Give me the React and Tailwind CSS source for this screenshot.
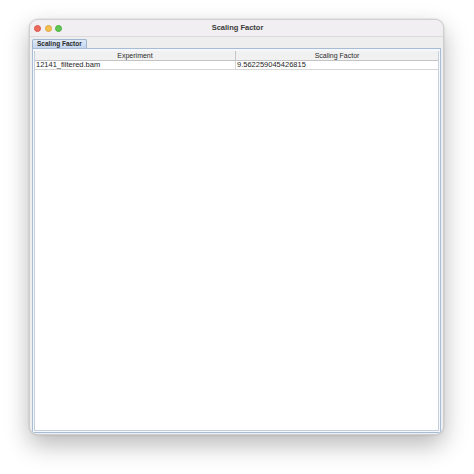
const font = { fontFamily: '"Liberation Sans", Arial, sans-serif' };

const TrafficLights = () => (
  <div className="flex items-center gap-[3.5px] absolute left-[4px] top-[5px]">
    <span className="w-[7px] h-[7px] rounded-full bg-[#ed6a5e] border border-[#d9554a]" />
    <span className="w-[7px] h-[7px] rounded-full bg-[#f5bf4f] border border-[#dba43c]" />
    <span className="w-[7px] h-[7px] rounded-full bg-[#61c554] border border-[#4eae43]" />
  </div>
);

export default function App() {
  return (
    <div
      className="w-[474px] h-[474px] bg-white pl-[29px] pt-[19px] text-[#1a1a1a]"
      style={font}>
      <div className="w-[415px] h-[416px] flex flex-col rounded-[9px] border border-[#cfcfcf] bg-[#efeeef] overflow-hidden shadow-[0_10px_24px_rgba(0,0,0,0.28),0_0_2px_rgba(0,0,0,0.2)]">
        {/* title bar */}
        <div className="relative h-[17px] shrink-0 flex items-center justify-center bg-[#f1eff1] border-b border-[#dcdadc] pl-[2px]">
          <TrafficLights />
          <span className="text-[7.5px] font-bold text-[#3a3a3a] leading-none mt-[-1px]">
            Scaling Factor
          </span>
        </div>

        {/* content */}
        <div className="flex-1 flex flex-col pt-[2px] px-[2px] pb-[1px] bg-[#eeeeee]">
          <div className="flex">
            <div className="h-[9px] px-[4px] flex items-center rounded-t-[2px] border border-b-0 border-[#9fb4cf] bg-gradient-to-b from-[#dfeaf7] to-[#c3d6ee] text-[6.5px] font-bold text-[#2b2b2b] leading-none">
              Scaling Factor
            </div>
          </div>
          <div className="flex-1 border border-[#a9bcd6] bg-[#f4f7fb] p-[1px] pt-[2px]">
            <div className="h-full bg-white border border-t-0 border-[#c6cfdc]">
              <div className="grid grid-cols-[201px_1fr] h-[10px] bg-[#f1f1f1] border-b border-[#c4c4c4] text-[7px] leading-none text-[#2b2b2b]">
                <div className="flex items-center justify-center border-r border-[#c4c4c4]">
                  Experiment
                </div>
                <div className="flex items-center justify-center">
                  Scaling Factor
                </div>
              </div>
              <div className="grid grid-cols-[201px_1fr] h-[9px] border-b border-[#d6d6d6] text-[7.5px] leading-none text-[#1e1e1e]">
                <div className="flex items-center pl-[1px] border-r border-[#d6d6d6]">
                  12141_filtered.bam
                </div>
                <div className="flex items-center pl-[1px]">
                  9.562259045426815
                </div>
              </div>
            </div>
          </div>
        </div>
      </div>
    </div>
  );
}
